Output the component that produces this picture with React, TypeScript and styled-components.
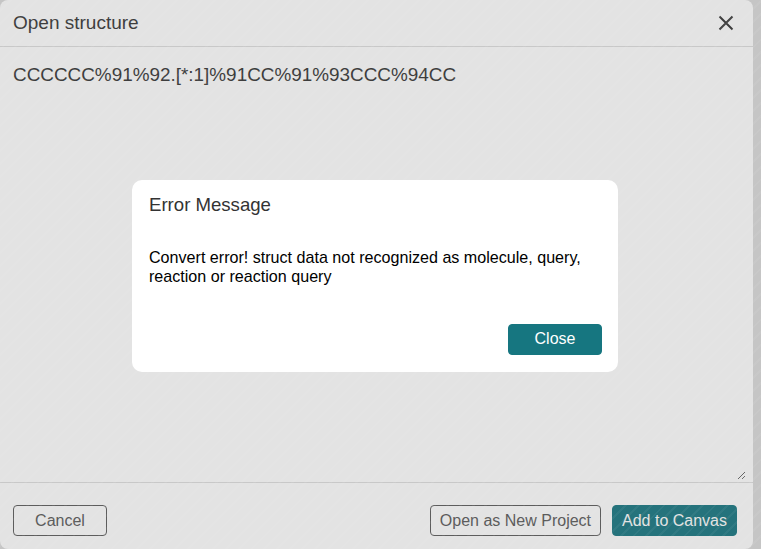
import styled, { createGlobalStyle } from "styled-components"

const GlobalStyle = createGlobalStyle`
    html, body {
        margin: 0;
        padding: 0;
        height: 100%;
    }
    body {
        font-family: 'Liberation Sans', Arial, sans-serif;
        background: #dbdbdb;
        overflow: hidden;
    }
    #root {
        height: 100%;
    }
`

const Page = styled.div`
    position: relative;
    width: 761px;
    height: 549px;
    display: flex;
`

const Dialog = styled.section`
    width: 753px;
    height: 549px;
    background: #fff;
    border-radius: 8px;
    display: flex;
    flex-direction: column;
    box-sizing: border-box;
    color: #333;
`

const Header = styled.header`
    height: 47px;
    box-sizing: border-box;
    flex: none;
    display: flex;
    align-items: center;
    justify-content: space-between;
    padding: 0 18px 0 13px;
    border-bottom: 1px solid #dedede;
`

const Title = styled.h2`
    margin: 0;
    font-size: 19px;
    font-weight: 400;
    color: #333;
`

const IconButton = styled.button`
    border: none;
    background: none;
    padding: 0;
    width: 18px;
    height: 18px;
    display: flex;
    align-items: center;
    justify-content: center;
    color: #333;
`

const Body = styled.div`
    flex: 1;
    display: flex;
    padding: 16px 7px 2px 13px;
    border-bottom: 1px solid #dedede;
`

const StructureText = styled.textarea`
    flex: 1;
    border: none;
    outline: none;
    background: transparent;
    resize: vertical;
    padding: 0;
    font-family: inherit;
    font-size: 18.9px;
    line-height: 24px;
    color: #333;
`

const Footer = styled.footer`
    flex: none;
    display: flex;
    align-items: center;
    justify-content: space-between;
    padding: 22px 16px 13px 13px;
`

const ButtonGroup = styled.div`
    display: flex;
    gap: 11px;
`

const Button = styled.button<{ $primary?: boolean; $width?: number }>`
    height: 31px;
    box-sizing: border-box;
    padding: 0 9px;
    min-width: ${p => p.$width ?? 0}px;
    border-radius: 4px;
    font-family: inherit;
    font-size: 16px;
    border: 1px solid ${p => (p.$primary ? "#167680" : "#5a5a5a")};
    background: ${p => (p.$primary ? "#167680" : "transparent")};
    color: ${p => (p.$primary ? "#fff" : "#585858")};
`

const Overlay = styled.div`
    position: absolute;
    inset: 0;
    display: flex;
    align-items: center;
    justify-content: center;
    padding-right: 11px;
    background-color: rgba(107, 107, 107, 0.19);
    background-image: repeating-linear-gradient(
        135deg,
        rgba(255, 255, 255, 0) 0 7px,
        rgba(255, 255, 255, 0.05) 7px 9px
    );
`

const Modal = styled.div`
    width: 486px;
    height: 192px;
    margin-top: 2px;
    box-sizing: border-box;
    background: #fff;
    border-radius: 10px;
    padding: 14px 16px 17px 17px;
    display: flex;
    flex-direction: column;
`

const ModalTitle = styled.h3`
    margin: 0;
    font-size: 18.6px;
    font-weight: 400;
    color: #333;
`

const Message = styled.p`
    margin: 32px 0 0;
    font-size: 16.1px;
    line-height: 19.5px;
    color: #000;
    flex: 1;
`

const ModalActions = styled.div`
    display: flex;
    justify-content: flex-end;
`

const CloseIcon = () => (
    <svg width="16" height="16" viewBox="0 0 16 16" fill="none">
        <path d="M1.5 1.5 L14.5 14.5 M14.5 1.5 L1.5 14.5" stroke="currentColor" strokeWidth="2" />
    </svg>
)

export default function App() {
    return (
        <>
            <GlobalStyle />
            <Page>
                <Dialog>
                    <Header>
                        <Title>Open structure</Title>
                        <IconButton aria-label="close">
                            <CloseIcon />
                        </IconButton>
                    </Header>
                    <Body>
                        <StructureText readOnly value="CCCCCC%91%92.[*:1]%91CC%91%93CCC%94CC" />
                    </Body>
                    <Footer>
                        <Button $width={94}>Cancel</Button>
                        <ButtonGroup>
                            <Button>Open as New Project</Button>
                            <Button $primary>Add to Canvas</Button>
                        </ButtonGroup>
                    </Footer>
                </Dialog>
                <Overlay>
                    <Modal>
                        <ModalTitle>Error Message</ModalTitle>
                        <Message>
                            Convert error! struct data not recognized as molecule, query,
                            reaction or reaction query
                        </Message>
                        <ModalActions>
                            <Button $primary $width={94}>Close</Button>
                        </ModalActions>
                    </Modal>
                </Overlay>
            </Page>
        </>
    )
}
